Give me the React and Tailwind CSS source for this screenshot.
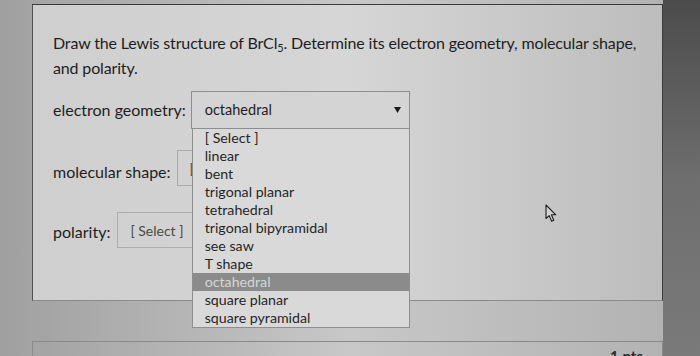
import React from 'react';

const options = [
  '[ Select ]',
  'linear',
  'bent',
  'trigonal planar',
  'tetrahedral',
  'trigonal bipyramidal',
  'see saw',
  'T shape',
  'octahedral',
  'square planar',
  'square pyramidal',
];

const Caret = () => (
  <svg width="7" height="6" viewBox="0 0 7 6" className="shrink-0">
    <path d="M0 0 H7 L3.5 6 Z" fill="#1c1c1c" />
  </svg>
);

const Pointer = () => (
  <svg width="13" height="19" viewBox="0 0 13 19" className="absolute left-[545px] top-[204px]">
    <path
      d="M1 1 L1 14.5 L4.2 11.6 L6.6 17.2 L8.8 16.2 L6.4 10.8 L10.8 10.8 Z"
      fill="#d2d2d2"
      stroke="#1e1e1e"
      strokeWidth="1.1"
      strokeLinejoin="round"
    />
  </svg>
);

export default function App() {
  return (
    <div className="relative flex h-[356px] w-[700px] overflow-hidden bg-gradient-to-r from-[#a0a0a0] via-[#c8c8c8] to-[#b0b0b0] font-[Lato,sans-serif] text-[#1e1e1e]">
      <div className="w-[32px] shrink-0" />

      <div className="flex w-[631px] shrink-0 flex-col">
        {/* question card */}
        <div className="mt-[4px] h-[297px] shrink-0 border border-t-[#3a3a3a] border-l-[#505050] border-r-[#3c3c3c] border-b-[#8a8a8a] bg-gradient-to-r from-[#cfcfcf] via-[#d6d6d6] to-[#bdbdbd] px-[20px] pt-[25px]">
          <p className="whitespace-nowrap text-[16px] leading-[25px] tracking-[-0.15px]">
            Draw the Lewis structure of BrCl<sub className="text-[11px]">5</sub>. Determine its electron geometry, molecular shape,
            <br />
            and polarity.
          </p>

          <div className="mt-[11px] flex items-center gap-[5px]">
            <span className="text-[16px]">electron geometry:</span>
            <div className="relative">
              <div className="flex h-[38px] w-[219px] items-center justify-between border border-[#8e8e8e] bg-[#d4d4d4] pl-[13px] pr-[8px] text-[14.5px]">
                <span>octahedral</span>
                <Caret />
              </div>
              <ul className="absolute left-[1px] right-0 top-full z-10 border border-t-0 border-[#8e8e8e] bg-[#d9d9d9] text-[14.2px] text-[#262626]">
                {options.map((o) => (
                  <li
                    key={o}
                    className={
                      o === 'octahedral'
                        ? 'h-[18px] bg-[#8b8b8b] pl-[12px] leading-[18px] text-[#d6d6d6]'
                        : 'h-[18px] pl-[12px] leading-[18px]'
                    }
                  >
                    {o}
                  </li>
                ))}
              </ul>
            </div>
          </div>

          <div className="mt-[21px] flex items-center gap-[6px]">
            <span className="mt-[8px] text-[16px]">molecular shape:</span>
            <div className="flex h-[36px] w-[80px] items-center border border-[#a8a8a8] pl-[12px] text-[14px] text-[#4a4a4a]">
              [
            </div>
          </div>

          <div className="mt-[26px] flex items-center gap-[7px]">
            <span className="mt-[3px] text-[16px]">polarity:</span>
            <div className="flex h-[36px] w-[86px] items-center border border-[#adadad] pl-[12px] text-[14px] text-[#4a4a4a]">
              [ Select ]
            </div>
          </div>
        </div>

        {/* next question card */}
        <div className="mt-[40px] flex min-h-0 flex-1 justify-end overflow-hidden border border-b-0 border-[#8a8a8a] pr-[19px] pt-[4px]">
          <span className="text-[15px] font-bold leading-[20px] text-[#2a2a2a]">1 pts</span>
        </div>
      </div>

      <div className="flex-1 bg-gradient-to-b from-[#4c4c4c] via-[#6e6e6e] to-[#7a7a7a]" />

      <Pointer />
    </div>
  );
}
